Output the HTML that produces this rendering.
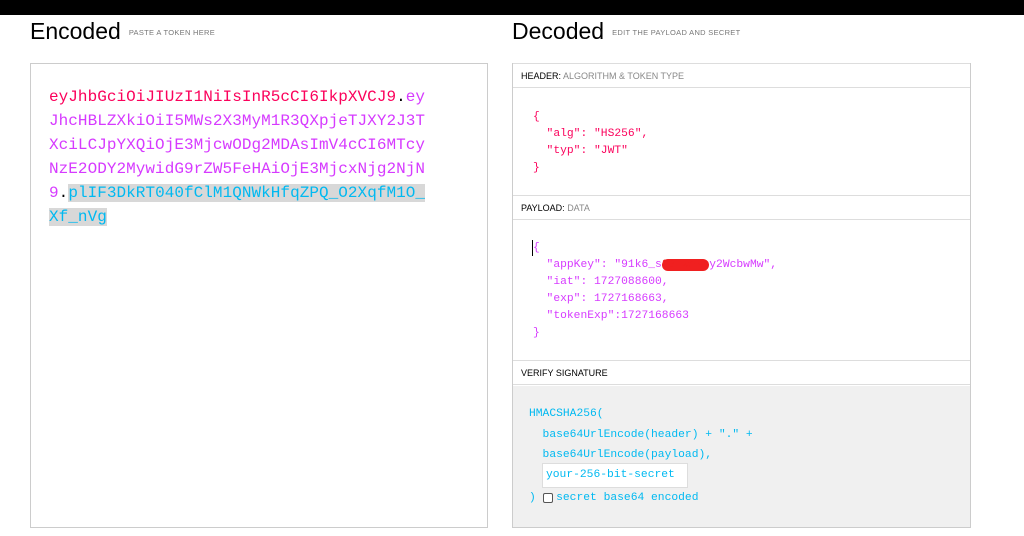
<!DOCTYPE html>
<html><head><meta charset="utf-8"><style>
*{margin:0;padding:0;box-sizing:border-box}
body{width:1024px;height:536px;background:#fff;position:relative;overflow:hidden;font-family:"Liberation Sans",sans-serif}
.top{position:absolute;left:0;top:0;width:1024px;height:15px;background:#000}
h1{position:absolute;top:18px;font-weight:normal;font-size:23px;color:#000}
h1 small{font-size:7.5px;color:#777;letter-spacing:.3px;margin-left:8px;vertical-align:middle}
.box{position:absolute;left:30px;top:63px;width:458px;height:465px;border:1px solid #ccc}
.enc{position:absolute;left:49px;top:85px;font-family:"Liberation Mono",monospace;font-size:16px;line-height:24px;width:380px;word-break:break-all;color:#d63aff;letter-spacing:0.04px}
.r{color:#fb015b}.k{color:#000}.b{color:#00b9f1;background:#d8d8d8}
.panel{position:absolute;left:512px;top:63px;width:459px;height:465px;border:1px solid #ccc}
.bar{position:absolute;left:0;width:457px;height:25px;border-bottom:1px solid #ddd;border-top:1px solid #ddd;font-size:9px;color:#000;padding:7px 8px;background:#fff}
.bar span{color:#888}
pre{position:absolute;font-family:"Liberation Mono",monospace;font-size:11.3px;line-height:17px}
.gray{position:absolute;left:0;top:322px;width:457px;height:141px;background:#f0f0f0}
</style></head><body>
<div class="top"></div>
<h1 style="left:30px">Encoded<small>PASTE A TOKEN HERE</small></h1>
<h1 style="left:512px">Decoded<small>EDIT THE PAYLOAD AND SECRET</small></h1>
<div class="box"></div>
<div class="enc"><span class="r">eyJhbGciOiJIUzI1NiIsInR5cCI6IkpXVCJ9</span><span class="k">.</span>eyJhcHBLZXkiOiI5MWs2X3MyM1R3QXpjeTJXY2J3TXciLCJpYXQiOjE3MjcwODg2MDAsImV4cCI6MTcyNzE2ODY2MywidG9rZW5FeHAiOjE3MjcxNjg2NjN9<span class="k">.</span><span class="b">plIF3DkRT040fClM1QNWkHfqZPQ_O2XqfM1O_Xf_nVg</span></div>
<div class="panel">
<div class="bar" style="top:-1px">HEADER: <span>ALGORITHM &amp; TOKEN TYPE</span></div>
<pre style="left:20px;top:45px;color:#fb015b">{
  "alg": "HS256",
  "typ": "JWT"
}</pre>
<div class="bar" style="top:131px">PAYLOAD: <span>DATA</span></div>
<div style="position:absolute;left:19px;top:176px;width:1px;height:16px;background:#000"></div>
<pre style="left:20px;top:176px;color:#d63aff">{
  "appKey": "91k6_s<span style="background:#f02020;color:#f02020;border-radius:6px">23TwAzc</span>y2WcbwMw",
  "iat": 1727088600,
  "exp": 1727168663,
  "tokenExp":1727168663
}</pre>
<div class="gray"></div>
<div class="bar" style="top:296px">VERIFY SIGNATURE</div>
<pre style="left:16px;top:340px;color:#00b9f1;line-height:20.5px">HMACSHA256(
  base64UrlEncode(header) + "." +
  base64UrlEncode(payload),
</pre>
<div style="position:absolute;left:29px;top:399px;width:146px;height:25px;background:#fff;border:1px solid #ddd;font-family:'Liberation Mono',monospace;font-size:11.3px;color:#00b9f1;padding:5px 3px">your-256-bit-secret</div>
<pre style="left:16px;top:426px;color:#00b9f1">)   secret base64 encoded</pre>
<div style="position:absolute;left:30px;top:429px;width:10px;height:10px;border:1px solid #555;border-radius:2px;background:#fff"></div>
</div>
</body></html>
